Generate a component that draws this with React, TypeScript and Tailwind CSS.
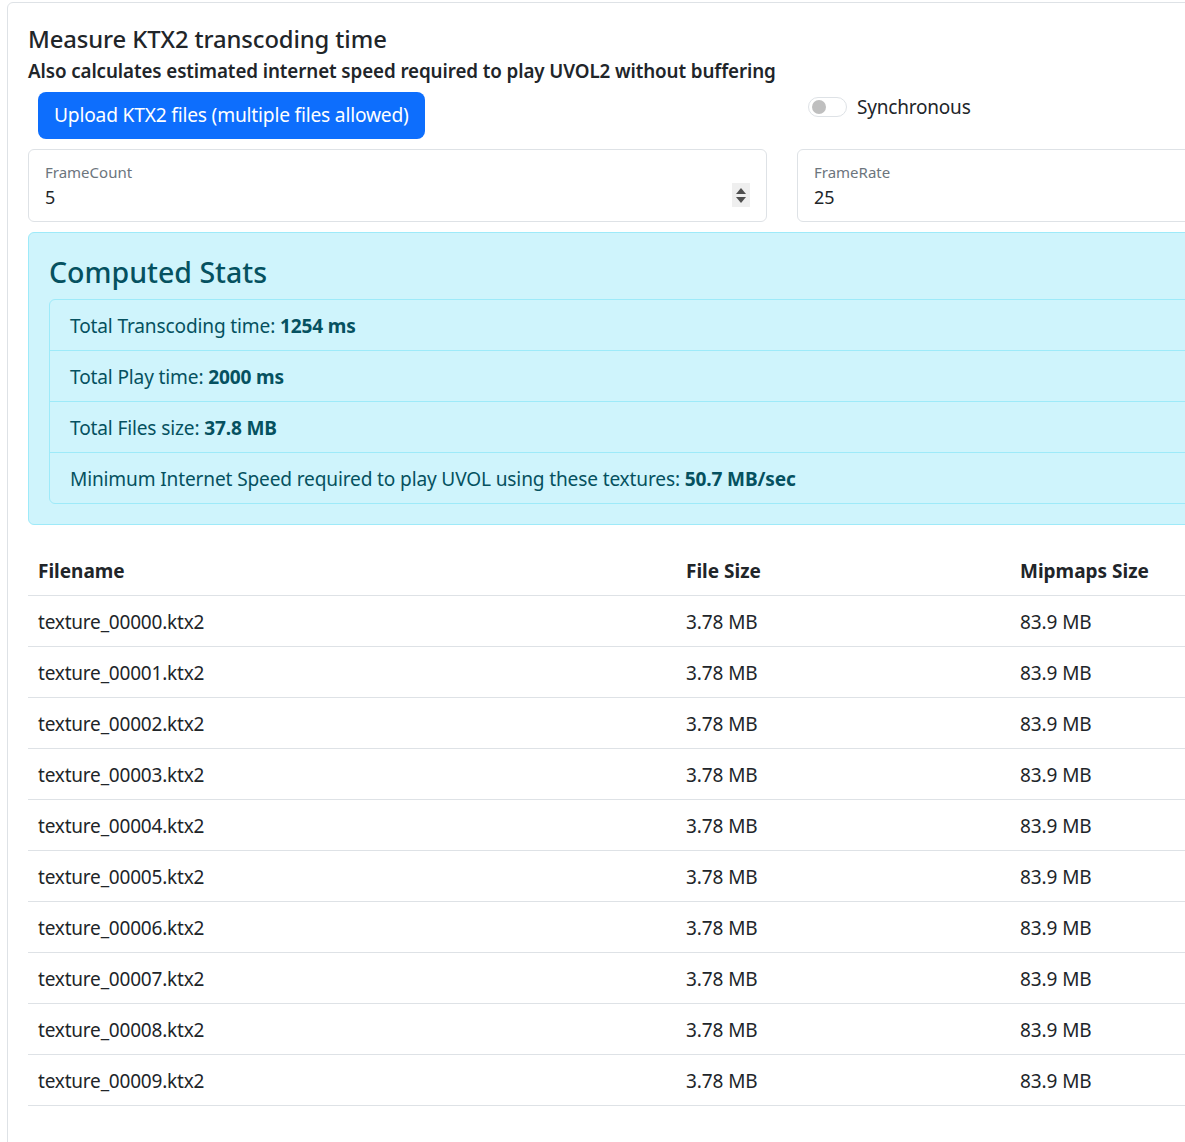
import React from "react";

const rows = Array.from({ length: 10 }, (_, i) => `texture_0000${i}.ktx2`);

export default function App() {
  return (
    <div className="w-[1185px] h-[1142px] overflow-hidden bg-white text-[#212529]" style={{ fontFamily: '"Noto Sans", "Open Sans", sans-serif' }}>
      <div className="ml-[7px] mt-[2px] w-[1560px] min-h-[1200px] border border-[#dee2e6] rounded-[6px] pl-[20px] pr-[20px]">
        <h4 className="mt-[19px] text-[23.8px] leading-[34px] font-medium tracking-[-0.1px]">Measure KTX2 transcoding time</h4>
        <h5 className="mt-[3px] text-[18.8px] leading-[24px] font-semibold tracking-[-0.1px]">Also calculates estimated internet speed required to play UVOL2 without buffering</h5>
        <div className="flex mt-[9px] h-[47px] items-start">
          <div className="w-[769px] pl-[10px]">
            <button className="h-[47px] px-[16px] rounded-[8px] bg-[#0d6efd] text-white text-[19.2px] tracking-[-0.2px]">Upload KTX2 files (multiple files allowed)</button>
          </div>
          <div className="flex items-center gap-[10px] pl-[11px] mt-[2px]">
            <span className="relative inline-block w-[39px] h-[20px] rounded-full border border-[#dee2e6] bg-white">
              <span className="absolute left-[3px] top-[2px] w-[14px] h-[14px] rounded-full bg-[#bfbfbf]" />
            </span>
            <span className="text-[19px] leading-[26px] tracking-[-0.2px]">Synchronous</span>
          </div>
        </div>
        <div className="flex gap-[30px] mt-[10px]">
          <div className="relative w-[739px] h-[73px] border border-[#dee2e6] rounded-[6px] pl-[16px]">
            <div className="pt-[12px] text-[15px] leading-[20px] text-[#6c757d]">FrameCount</div>
            <div className="mt-[2px] text-[18px] leading-[26px]">5</div>
            <div className="absolute right-[16px] top-[33px] w-[18px] h-[24px] bg-[#efefef] flex flex-col items-center justify-center gap-[3px]">
              <svg width="10" height="6" viewBox="0 0 10 6"><path d="M0 6 L5 0 L10 6 Z" fill="#505050" /></svg>
              <svg width="10" height="6" viewBox="0 0 10 6"><path d="M0 0 L5 6 L10 0 Z" fill="#505050" /></svg>
            </div>
          </div>
          <div className="w-[739px] h-[73px] border border-[#dee2e6] rounded-[6px] pl-[16px]">
            <div className="pt-[12px] text-[15px] leading-[20px] text-[#6c757d]">FrameRate</div>
            <div className="mt-[2px] text-[18px] leading-[26px]">25</div>
          </div>
        </div>
        <div className="mt-[10px] w-[1508px] h-[293px] border border-[#9eeaf9] bg-[#cff4fc] rounded-[6px] px-[20px] text-[#055160]">
          <h3 className="mt-[20px] text-[28.5px] leading-[38px] font-medium">Computed Stats</h3>
          <div className="mt-[8px] border border-[#9eeaf9] rounded-[6px]">
            {[
              ["Total Transcoding time: ", "1254 ms"],
              ["Total Play time: ", "2000 ms"],
              ["Total Files size: ", "37.8 MB"],
              ["Minimum Internet Speed required to play UVOL using these textures: ", "50.7 MB/sec"],
            ].map(([a, b], i) => (
              <div key={i} className={`flex items-center pl-[20px] pt-[2px] text-[19.1px] ${i > 0 ? "border-t border-[#9eeaf9]" : ""}`} style={{ height: i === 0 ? 50 : 51 }}>
                <span className="tracking-[-0.15px]">{a}<b className="font-bold">{b}</b></span>
              </div>
            ))}
          </div>
        </div>
        <table className="mt-[20px] w-[1508px] text-[19px] border-collapse">
          <thead>
            <tr className="h-[50px] border-b border-[#dee2e6]">
              <th className="w-[658px] text-left font-bold pl-[10px] pt-[2px]">Filename</th>
              <th className="w-[334px] text-left font-bold pt-[2px]">File Size</th>
              <th className="text-left font-bold pt-[2px]">Mipmaps Size</th>
            </tr>
          </thead>
          <tbody>
            {rows.map((r) => (
              <tr key={r} className="h-[51px] border-b border-[#dee2e6]">
                <td className="pl-[10px] pt-[3px] tracking-[-0.2px]">{r}</td>
                <td className="pt-[3px] tracking-[-0.1px]">3.78 MB</td>
                <td className="pt-[3px] tracking-[-0.1px]">83.9 MB</td>
              </tr>
            ))}
          </tbody>
        </table>
      </div>
    </div>
  );
}
